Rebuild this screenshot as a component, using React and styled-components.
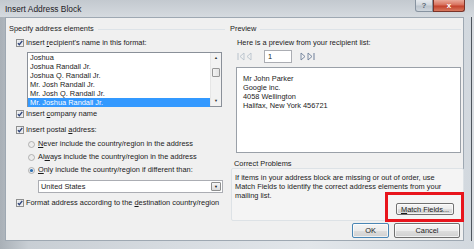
import React from 'react'
import styled, { createGlobalStyle } from 'styled-components'

const GlobalStyle = createGlobalStyle`
  html, body { margin: 0; padding: 0; background: #c4cad0; }
  body { font-family: "Liberation Sans", Arial, sans-serif; }
`

const names = [
  'Joshua',
  'Joshua Randall Jr.',
  'Joshua Q. Randall Jr.',
  'Mr. Josh Randall Jr.',
  'Mr. Josh Q. Randall Jr.',
  'Mr. Joshua Randall Jr.',
]

const address = ['Mr John Parker', 'Google inc.', '4058 Wellington', 'Halifax, New York 456721']

function CheckBox() {
  return (
    <svg width="8" height="8" viewBox="0 0 8 8">
      <rect x="0.5" y="0.5" width="7" height="7" fill="#f6f6f6" stroke="#8e8f8f" />
      <rect x="1.5" y="1.5" width="5" height="5" fill="#e3e6ea" />
      <path d="M1.9 4.1 L3.3 5.7 L6.3 1.9" fill="none" stroke="#2d4177" strokeWidth="1.3" />
    </svg>
  )
}

function Radio({ on }) {
  return (
    <svg width="7" height="7" viewBox="0 0 7 7">
      <circle cx="3.5" cy="3.5" r="3" fill="#ececec" stroke="#a2a2a2" strokeWidth="0.8" />
      {on && <circle cx="3.5" cy="3.5" r="1.6" fill="#2c6fb3" />}
    </svg>
  )
}

function Tri({ dir, bar, color }) {
  const left = dir === 'left'
  return (
    <svg width={bar ? 8 : 6} height="9" viewBox={bar ? '0 0 8 9' : '0 0 6 9'}>
      {bar && <path d={left ? 'M1 1 V8' : 'M7 1 V8'} stroke={color} strokeWidth="1" />}
      {left
        ? <path d={bar ? 'M7 1 L3 4.5 L7 8 Z' : 'M5 1 L1 4.5 L5 8 Z'} fill="none" stroke={color} strokeWidth="0.9" />
        : <path d="M1 1 L5 4.5 L1 8 Z" fill="none" stroke={color} strokeWidth="0.9" />}
    </svg>
  )
}

function App() {
  return (
    <Window>
      <GlobalStyle />
      <TitleBar>
        <Title>Insert Address Block</Title>
        <Captions>
          <CaptionButton $w={18}>?</CaptionButton>
          <CaptionButton $w={32} $close>x</CaptionButton>
        </Captions>
      </TitleBar>
      <Middle>
        <Client>
          <Column>
            <GroupHeader>Specify address elements</GroupHeader>
            <Option $mt={4} $indent={7}>
              <CheckBox />
              <span>Insert <u>r</u>ecipient's name in this format:</span>
            </Option>
            <ListBox>
              <Items>
                {names.map((n, i) => (
                  <Item key={n} $selected={i === names.length - 1}>{n}</Item>
                ))}
              </Items>
              <ScrollBar>
                <Arrow>▲</Arrow>
                <Thumb />
                <Arrow $down>▼</Arrow>
              </ScrollBar>
            </ListBox>
            <Option $mt={2} $indent={7}>
              <CheckBox />
              <span>Insert <u>c</u>ompany name</span>
            </Option>
            <Option $mt={6} $indent={7}>
              <CheckBox />
              <span>Insert postal <u>a</u>ddress:</span>
            </Option>
            <Option $mt={4} $indent={19}>
              <Radio />
              <span><u>N</u>ever include the country/region in the address</span>
            </Option>
            <Option $mt={3} $indent={19}>
              <Radio />
              <span>Al<u>w</u>ays include the country/region in the address</span>
            </Option>
            <Option $mt={3} $indent={19}>
              <Radio on />
              <span><u>O</u>nly include the country/region if different than:</span>
            </Option>
            <Combo>
              <span>United States</span>
              <ComboButton>▼</ComboButton>
            </Combo>
            <Option $mt={5} $indent={7}>
              <CheckBox />
              <span>Format address according to the <u>d</u>estination country/region</span>
            </Option>
          </Column>

          <Column>
            <GroupHeader $wide>Preview</GroupHeader>
            <Text $mt={4} $indent={7}>Here is a preview from your recipient list:</Text>
            <Nav>
              <Tri dir="left" bar color="#b8c2cc" />
              <Tri dir="left" color="#b8c2cc" />
              <NumberBox>1</NumberBox>
              <Tri dir="right" color="#6e7f99" />
              <Tri dir="right" bar color="#6e7f99" />
            </Nav>
            <PreviewBox>
              {address.map(l => <div key={l}>{l}</div>)}
            </PreviewBox>
            <SubLabel>Correct Problems</SubLabel>
            <Panel>
              <Para>
                If items in your address block are missing or out of order, use
                Match Fields to identify the correct address elements from your
                mailing list.
              </Para>
              <PanelActions>
                <Marked>
                  <Button $w={58} $h={12}><u>M</u>atch Fields...</Button>
                </Marked>
              </PanelActions>
            </Panel>
            <Footer>
              <Button $w={37} $h={15} $default>OK</Button>
              <Button $w={66} $h={15}>Cancel</Button>
            </Footer>
          </Column>
        </Client>
        <RightFrame />
      </Middle>
    </Window>
  )
}

export default App

const Window = styled.div`
  width: 474px;
  height: 249px;
  display: flex;
  flex-direction: column;
  overflow: hidden;
  background: linear-gradient(90deg, #a9b0b7 0%, #c8ced4 6%, #d6dbe0 35%, #e2e6ea 65%, #d2d8de 100%);
  color: #1b1b1b;
`

const TitleBar = styled.div`
  height: 17px;
  flex: none;
  display: flex;
  justify-content: space-between;
  align-items: flex-start;
  padding-left: 5px;
  background: linear-gradient(180deg, #c3c9cf 0%, #d5dadf 100%);
`

const Title = styled.div`
  font-size: 8.4px;
  line-height: 18px;
  color: #1e2125;
`

const Captions = styled.div`
  display: flex;
  margin-right: 9px;
`

const CaptionButton = styled.div`
  width: ${p => p.$w}px;
  height: 12px;
  box-sizing: border-box;
  display: flex;
  align-items: center;
  justify-content: center;
  font-size: 8px;
  font-weight: bold;
  color: ${p => (p.$close ? '#ffffff' : '#5e6a78')};
  border: 1px solid ${p => (p.$close ? '#7a3328' : '#8793a0')};
  border-top: none;
  border-radius: ${p => (p.$close ? '0 0 3px 0' : '0 0 0 3px')};
  background: ${p =>
    p.$close
      ? 'linear-gradient(180deg, #e9a99a 0%, #d8705c 45%, #c3422c 55%, #d8785e 100%)'
      : 'linear-gradient(180deg, #e6eaee 0%, #d2d8de 45%, #bcc4cc 55%, #cfd6dd 100%)'};
`

const Middle = styled.div`
  height: 224px;
  flex: none;
  display: flex;
  padding-left: 5px;
`

const Client = styled.div`
  width: 459px;
  box-sizing: border-box;
  border: 1px solid #9ea8b2;
  background: #f0f0f0;
  padding: 6px 0 0 3px;
  display: grid;
  grid-template-columns: 216px 233px;
  column-gap: 5px;
  font-size: 7.4px;
`

const RightFrame = styled.div`
  width: 10px;
  box-shadow: inset -2px 0 0 #d9dde1, inset -3px 0 0 #4f565e;
`

const Column = styled.div`
  display: flex;
  flex-direction: column;
`

const GroupHeader = styled.div`
  height: 10px;
  line-height: 10px;
  display: flex;
  align-items: center;
  gap: 4px;
  white-space: nowrap;
  color: #1e3287;
  color: #222;
  padding-right: ${p => (p.$wide ? 2 : 0)}px;

  &::after {
    content: '';
    flex: 1;
    height: 1px;
    background: #dde3e8;
  }
`

const Option = styled.div`
  height: 10px;
  line-height: 10px;
  margin-top: ${p => p.$mt}px;
  padding-left: ${p => p.$indent}px;
  display: flex;
  align-items: center;
  gap: ${p => (p.$indent > 10 ? 3 : 2)}px;
  white-space: nowrap;

  svg { flex: none; }
`

const Text = styled.div`
  height: 10px;
  line-height: 10px;
  margin-top: ${p => p.$mt}px;
  padding-left: ${p => p.$indent}px;
  white-space: nowrap;
`

const ListBox = styled.div`
  margin: 4px 0 0 18px;
  width: 195px;
  height: 55px;
  box-sizing: border-box;
  border: 1px solid #8a9099;
  background: #ffffff;
  display: flex;
`

const Items = styled.div`
  flex: 1;
  padding-top: 0px;
`

const Item = styled.div`
  height: 9px;
  line-height: 9px;
  padding-left: 2px;
  white-space: nowrap;
  background: ${p => (p.$selected ? '#3399ff' : 'transparent')};
  color: ${p => (p.$selected ? '#ffffff' : '#1b1b1b')};
`

const ScrollBar = styled.div`
  width: 10px;
  display: flex;
  flex-direction: column;
  align-items: center;
  background: #f2f2f2;
  border-left: 1px solid #e6e6e6;
`

const Arrow = styled.div`
  height: 8px;
  line-height: 8px;
  font-size: 4px;
  color: #333;
  margin-top: ${p => (p.$down ? 'auto' : '1px')};
  margin-bottom: ${p => (p.$down ? '1px' : '0')};
`

const Thumb = styled.div`
  width: 8px;
  height: 9px;
  margin-top: 6px;
  box-sizing: border-box;
  border: 1px solid #979797;
  border-radius: 1px;
  background: linear-gradient(90deg, #f3f3f3, #e2e2e2);
`

const Combo = styled.div`
  margin: 5px 0 0 29px;
  width: 185px;
  height: 13px;
  box-sizing: border-box;
  border: 1px solid #abadb3;
  background: #ffffff;
  display: flex;
  align-items: center;
  justify-content: space-between;
  padding-left: 2px;
  line-height: 11px;
`

const ComboButton = styled.div`
  width: 10px;
  height: 9px;
  margin-right: 1px;
  box-sizing: border-box;
  border: 1px solid #8e8f8f;
  border-radius: 1px;
  background: linear-gradient(180deg, #f6f6f6, #dcdcdc);
  font-size: 4px;
  line-height: 7px;
  text-align: center;
  color: #111;
`

const Nav = styled.div`
  margin: 2px 0 0 7px;
  height: 13px;
  display: flex;
  align-items: center;
  gap: 1px;

  svg:nth-child(2) { margin-right: 11px; }
  svg:nth-child(4) { margin-left: 7px; }
`

const NumberBox = styled.div`
  width: 28px;
  height: 13px;
  box-sizing: border-box;
  border: 1px solid #abadb3;
  background: #ffffff;
  padding-left: 3px;
  line-height: 11px;
`

const PreviewBox = styled.div`
  margin: 4px 0 0 6px;
  width: 225px;
  height: 86px;
  box-sizing: border-box;
  border: 1px solid #9aa0a8;
  background: #ffffff;
  padding: 6px 0 0 6px;
  line-height: 9px;
`

const SubLabel = styled.div`
  margin: 6px 0 0 4px;
  height: 9px;
  line-height: 9px;
`

const Panel = styled.div`
  margin-left: 1px;
  width: 233px;
  box-sizing: border-box;
  border: 1px solid #dde2e6;
  border-radius: 2px;
  background: #f4f4f4;
  padding: 4px 0 5px 3px;
`

const Para = styled.div`
  line-height: 9px;
  width: 215px;
`

const PanelActions = styled.div`
  display: flex;
  justify-content: flex-end;
  margin-top: 3px;
  padding-right: 9px;
`

const Marked = styled.div`
  position: relative;

  &::after {
    content: '';
    position: absolute;
    left: -11px;
    right: -10px;
    top: -11px;
    bottom: -7px;
    border: 3px solid #e8141c;
    pointer-events: none;
  }
`

const Button = styled.div`
  width: ${p => p.$w}px;
  height: ${p => p.$h}px;
  box-sizing: border-box;
  border: 1px solid ${p => (p.$default ? '#4a86b4' : '#707070')};
  border-radius: 2px;
  background: linear-gradient(180deg, #f4f4f4 0%, #ececec 50%, #dedede 51%, #d0d0d0 100%);
  display: flex;
  align-items: center;
  justify-content: center;
  white-space: nowrap;
  box-shadow: inset 0 0 0 1px rgba(255, 255, 255, 0.7);
`

const Footer = styled.div`
  display: flex;
  justify-content: flex-end;
  gap: 5px;
  margin-top: 2px;
  padding-right: 3px;
`
